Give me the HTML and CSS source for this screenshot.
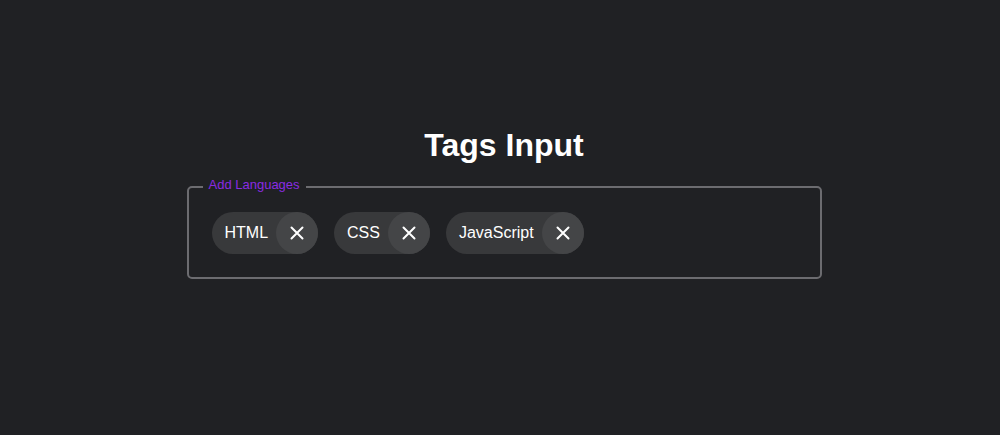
FILE: index.html
```html
<!DOCTYPE html>
<html lang="en">
<head>
<meta charset="utf-8">
<title>Tags Input</title>
<link rel="stylesheet" href="styles.css">
</head>
<body>
  <main class="page">
    <h1 class="title">Tags Input</h1>
    <fieldset class="tags-box">
      <legend class="tags-legend">Add Languages</legend>
      <div class="tags-list">
        <div class="tag">
          <span class="tag-label">HTML</span>
          <button class="tag-remove" type="button" aria-label="Remove HTML">
            <svg viewBox="0 0 14 14" width="14" height="14"><path d="M1.5 1.5 L12.5 12.5 M12.5 1.5 L1.5 12.5" /></svg>
          </button>
        </div>
        <div class="tag">
          <span class="tag-label">CSS</span>
          <button class="tag-remove" type="button" aria-label="Remove CSS">
            <svg viewBox="0 0 14 14" width="14" height="14"><path d="M1.5 1.5 L12.5 12.5 M12.5 1.5 L1.5 12.5" /></svg>
          </button>
        </div>
        <div class="tag">
          <span class="tag-label">JavaScript</span>
          <button class="tag-remove" type="button" aria-label="Remove JavaScript">
            <svg viewBox="0 0 14 14" width="14" height="14"><path d="M1.5 1.5 L12.5 12.5 M12.5 1.5 L1.5 12.5" /></svg>
          </button>
        </div>
      </div>
    </fieldset>
  </main>
</body>
</html>
```

FILE: styles.css
```css
html, body {
  margin: 0;
  height: 100%;
}

body {
  background: #202124;
  font-family: "Liberation Sans", Arial, sans-serif;
  color: #ffffff;
}

.page {
  box-sizing: border-box;
  height: 100%;
  padding: 127px 0 0 8px;
  display: flex;
  flex-direction: column;
  align-items: center;
}

.title {
  margin: 0;
  font-size: 32px;
  line-height: 37px;
  font-weight: 700;
  color: #ffffff;
}

.tags-box {
  box-sizing: border-box;
  width: 635px;
  margin: 13px 0 0;
  padding: 0 14px 23px 14px;
  border: 2px solid #6c6c70;
  border-radius: 5px;
  min-inline-size: 0;
}

.tags-legend {
  padding: 0 6px 5px;
  font-size: 13px;
  line-height: 15px;
  color: #8a2be2;
}

.tags-list {
  display: flex;
  flex-wrap: wrap;
  gap: 16px;
  padding: 15px 0 0 9px;
}

.tag {
  display: flex;
  align-items: center;
  height: 42px;
  padding-left: 13px;
  border-radius: 21px;
  background: #38393b;
}

.tag-label {
  font-size: 16px;
  line-height: 18px;
  color: #ffffff;
}

.tag-remove {
  display: flex;
  align-items: center;
  justify-content: center;
  width: 42px;
  height: 42px;
  margin-left: 8px;
  padding: 0;
  border: none;
  border-radius: 50%;
  background: #444547;
  cursor: pointer;
}

.tag-remove svg path {
  fill: none;
  stroke: #ffffff;
  stroke-width: 2;
  stroke-linecap: round;
}
```
